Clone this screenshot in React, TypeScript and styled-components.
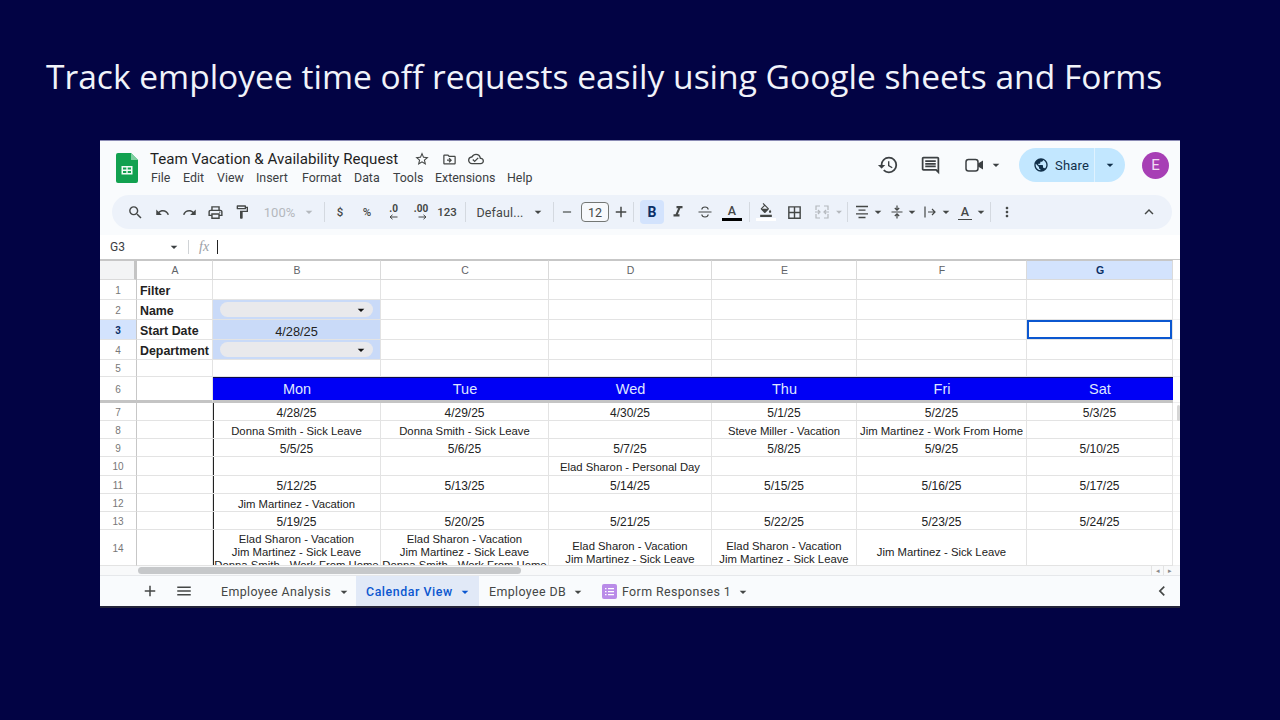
import React from "react";
import styled, { createGlobalStyle } from "styled-components";
import {
  MdAdd, MdArrowDropDown, MdBorderAll, MdChevronLeft, MdExpandLess, MdFormatColorFill,
  MdFormatItalic, MdHistory, MdMenu, MdMoreVert, MdOutlineComment, MdOutlineCloudDone, MdOutlineDriveFileMove,
  MdOutlineFormatPaint, MdPublic, MdRedo, MdSearch, MdStarBorder, MdUndo, MdRemove, MdOutlinePrint,
} from "react-icons/md";

const Global = createGlobalStyle`
  html, body { margin: 0; padding: 0; background: #020344; }
  * { box-sizing: border-box; }
`;
const Page = styled.div`
  width: 1280px; height: 720px; background: #020344; overflow: hidden;
  padding: 54px 0 0 46px;
`;
const Heading = styled.h1`
  margin: 0; font: 400 33.55px/44px "Open Sans", sans-serif; color: #f1f3fa; white-space: nowrap;
`;
const Win = styled.div`
  margin: 42px 0 0 54px; width: 1080px; height: 468px; background: #f9fbfd;
  border-top: 1px solid #8b8bb5; display: flex; flex-direction: column; overflow: hidden;
`;
const Top = styled.div`
  height: 54px; display: flex; align-items: flex-start; padding: 12px 11px 0 16px; flex: none;
`;
const Logo = styled.svg`
  width: 22px; height: 30px; flex: none; margin-right: 12px;
`;
const TitleCol = styled.div`
  display: flex; flex-direction: column;
`;
const TitleRow = styled.div`
  display: flex; align-items: center; height: 14px; margin-top: -1px;
  color: #444746; font-size: 15px;
`;
const Title = styled.span`
  font: 400 15.1px/14px Roboto, sans-serif; color: #1f1f1f; width: 258.500px; white-space: nowrap;
`;
const TitleIcon = styled.span`
  width: 27px; display: inline-flex; justify-content: center; color: #444746;
`;
const Menu = styled.div`
  display: flex; margin-top: 4px; padding-left: 1px; font: 400 12.4px/16px Roboto, sans-serif; color: #3c4043;
`;
const MenuItem = styled.span<{ $w: number }>`
  width: ${(p) => p.$w}px; white-space: nowrap;
`;
const TopRight = styled.div`
  margin-left: auto; display: flex; align-items: center; height: 34px; margin-top: -5px; color: #3c4043;
`;
const TopBtn = styled.span<{ $w: number }>`
  width: ${(p) => p.$w}px; display: inline-flex; justify-content: center; align-items: center; flex: none;
  svg { flex: none; }
`;
const VideoGlyph = styled.svg`
  width: 20px; height: 16px; flex: none;
`;
const Share = styled.div`
  width: 106px; height: 34px; border-radius: 17px; background: #c2e7ff; margin-left: 20px;
  display: flex; align-items: center; color: #11304a; font: 400 13px Roboto, sans-serif; letter-spacing: 0.2px;
`;
const ShareMain = styled.div`
  width: 76px; height: 100%; display: flex; align-items: center; padding-left: 14px; gap: 6px;
  border-right: 1px solid #dff2ff;
`;
const ShareCaret = styled.div`
  flex: 1; display: flex; justify-content: center; align-items: center;
`;
const Avatar = styled.div`
  width: 27px; height: 27px; border-radius: 50%; background: #a73fb5; color: #f0dcf2; margin-left: 17px;
  display: flex; align-items: center; justify-content: center; font: 400 15px Roboto, sans-serif;
`;
const Toolbar = styled.div`
  margin: 0 8px 0 12px; height: 34px; border-radius: 17px; background: #edf2fa; flex: none;
  display: flex; align-items: center; padding: 0 8px 0 10px; color: #444746;
`;
const Tool = styled.span<{ $w: number; $muted?: boolean }>`
  width: ${(p) => p.$w}px; height: 24px; flex: none; display: inline-flex; align-items: center; justify-content: center;
  color: ${(p) => (p.$muted ? "#b4b8bd" : "#444746")}; font: 500 11.5px Roboto, sans-serif; white-space: nowrap;
  svg { flex: none; }
`;
const Spacer = styled.span<{ $w: number }>`
  width: ${(p) => p.$w}px; flex: none;
`;
const Sep = styled.span<{ $w: number }>`
  width: ${(p) => p.$w}px; height: 20px; flex: none; display: inline-flex; justify-content: center;
  &::before { content: ""; width: 1px; background: #d4d9e0; }
`;
const ZoomTxt = styled.span`
  font: 400 13px Roboto, sans-serif; color: #b4b8bd; margin: 0 6px 0 8px;
`;
const FontName = styled.span`
  font: 400 12.5px Roboto, sans-serif; color: #444746; letter-spacing: 0.15px; margin-right: 6px;
`;
const SizeBox = styled.span`
  width: 28px; height: 20px; border: 1px solid #747775; border-radius: 4px; background: #f7f9fc;
  display: flex; align-items: center; justify-content: center; font: 400 12.5px Roboto, sans-serif; color: #444746;
`;
const BoldBtn = styled(Tool)`
  background: #d3e3fd; border-radius: 4px; color: #0b2f66; font: 700 14px Roboto, sans-serif;
`;
const ColorA = styled.span<{ $bar: string; $w?: number; $h?: number }>`
  display: flex; flex-direction: column; align-items: center; font: 500 12.5px/13px Roboto, sans-serif; color: #444746;
  &::after { content: ""; width: ${(p) => p.$w ?? 20}px; height: ${(p) => p.$h ?? 3}px; background: ${(p) => p.$bar}; margin-top: 1px; }
`;
const Decimal = styled.span`
  display: flex; flex-direction: column; align-items: flex-end; font: 700 10px/10px Roboto, sans-serif;
`;
const MiniArrow = styled.svg`
  width: 10px; height: 6px; display: block;
`;
const Glyph = styled.svg`
  width: 16px; height: 16px; flex: none; display: block;
`;
const Formula = styled.div`
  height: 25px; margin-top: 6px; flex: none; background: #fff; border-bottom: 1px solid #c7c7c7;
  display: flex; align-items: center; padding-left: 10px; font: 400 12px Roboto, sans-serif; color: #3c4043;
`;
const NameBox = styled.span`
  width: 72px; display: flex; justify-content: space-between; align-items: center;
`;
const Fx = styled.span`
  font: italic 400 14px "Liberation Serif", serif; color: #9aa0a6; margin: 0 8px 0 10px;
`;
const Cursor = styled.span`
  width: 1px; height: 14px; background: #222;
`;
const FormSep = styled.span`
  width: 1px; height: 14px; background: #d0d3d6; margin-left: 6px;
`;
const Grid = styled.div`
  display: grid; flex: none; background: #fff; height: 306px; overflow: hidden;
  grid-template-columns: 37px 76px 168px 168px 163px 145px 170px 146px 7px;
  grid-template-rows: 20px 20px 20px 20px 20px 17px 26px 18px 18px 18px 19px 18px 18px 18px 36px;
`;
const Cell = styled.div<{ $align?: string; $bold?: boolean; $fill?: boolean; $edge?: boolean; $size?: number }>`
  border-right: 1px solid #e3e3e3; border-bottom: 1px solid #e3e3e3; overflow: hidden;
  display: flex; align-items: center; justify-content: ${(p) => p.$align ?? "center"};
  font: ${(p) => (p.$bold ? 700 : 400)} ${(p) => p.$size ?? 12}px/13px "Liberation Sans", Arial, sans-serif; color: #222;
  white-space: nowrap; text-align: center; padding: ${(p) => (p.$align ? "3px 0 0 3px" : "3px 0 0")};
  background: ${(p) => (p.$fill ? "#c9daf8" : "#fff")};
  ${(p) => (p.$edge ? "box-shadow: inset 1px 0 0 #222;" : "")}
`;
const SelCell = styled(Cell)<{ $on: boolean }>`
  ${(p) => (p.$on ? "box-shadow: inset 0 0 0 2px #0b57d0;" : "")}
`;
const PillCell = styled(Cell)`
  padding: 0;
`;
const MultiCell = styled(Cell)`
  align-items: flex-start;
`;
const MultiInner = styled.div<{ $top: number }>`
  padding-top: ${(p) => p.$top}px;
`;
const ColHead = styled.div<{ $sel?: boolean; $corner?: boolean }>`
  border-right: ${(p) => (p.$corner ? "3px solid #c4c4c4" : "1px solid #dadada")};
  border-bottom: 1px solid #dadada; border-top: 1px solid #c7c7c7;
  background: ${(p) => (p.$corner ? "#f3f4f5" : p.$sel ? "#d3e3fd" : "#fff")};
  display: flex; align-items: center; justify-content: center; padding-left: 1px;
  font: ${(p) => (p.$sel ? 700 : 400)} 10.5px "Liberation Sans", Arial, sans-serif; color: ${(p) => (p.$sel ? "#0b2f66" : "#5f6368")};
`;
const RowHead = styled.div<{ $sel?: boolean; $thick?: boolean }>`
  border-right: 1px solid #c7c7c7; border-bottom: ${(p) => (p.$thick ? "3px solid #c4c4c4" : "1px solid #e3e3e3")};
  background: ${(p) => (p.$sel ? "#d3e3fd" : "#fff")}; padding-top: 1px;
  display: flex; align-items: center; justify-content: center;
  font: ${(p) => (p.$sel ? 700 : 400)} 10px "Liberation Sans", Arial, sans-serif; color: ${(p) => (p.$sel ? "#0b2f66" : "#777")};
`;
const Pill = styled.div`
  width: 153px; height: 15px; border-radius: 8px; background: #e9e9ec; display: flex; align-items: center;
  justify-content: flex-end; padding-right: 4px; color: #111;
`;
const DayCell = styled.div`
  background: #0000f5; color: #dfe6ff; font: 400 14.5px "Liberation Sans", Arial, sans-serif;
  border-top: 1px solid #0a0a50; border-bottom: 3px solid #c4c4c4;
  display: flex; align-items: center; justify-content: center;
`;
const PlainBottom = styled(Cell)`
  border-bottom: 3px solid #c4c4c4;
`;
const Gutter = styled.div`
  background: #fff; border-bottom: 1px solid #f0f0f0; position: relative;
`;
const ThumbGutter = styled(Gutter)`
  &::after { content: ""; position: absolute; left: 4px; top: 2px; width: 3px; height: 16px; background: #d6d6d6; border-radius: 2px; }
`;
const HScroll = styled.div`
  height: 10px; flex: none; background: #f8f9fa; border-bottom: 1px solid #e6e8eb; display: flex; align-items: center;
  padding: 0 5px 0 38px;
`;
const Thumb = styled.div`
  width: 383px; height: 7px; border-radius: 4px; background: #c6c8ca;
`;
const ArrowBox = styled.span`
  width: 12px; height: 9px; border-left: 1px solid #e3e3e3; display: flex; align-items: center; justify-content: center;
  font: 400 7px "Liberation Sans", Arial, sans-serif; color: #888;
`;
const ArrowWrap = styled.div`
  margin-left: auto; display: flex;
`;
const Tabs = styled.div`
  flex: 1; background: #f9fbfd; display: flex; align-items: stretch; border-bottom: 2px solid #24243a;
  font: 400 12.4px Roboto, sans-serif; letter-spacing: 0.4px; color: #444746; padding-left: 38px;
`;
const TabIcon = styled.span<{ $w: number }>`
  width: ${(p) => p.$w}px; display: flex; align-items: center; justify-content: center; flex: none;
`;
const TabItem = styled.div<{ $active?: boolean; $w: number; $pad: number }>`
  width: ${(p) => p.$w}px; padding: 1px 0 0 ${(p) => p.$pad}px; flex: none; display: flex; align-items: center; white-space: nowrap;
  background: ${(p) => (p.$active ? "#e1e9f7" : "transparent")};
  color: ${(p) => (p.$active ? "#0b57d0" : "#444746")}; font-weight: ${(p) => (p.$active ? 500 : 400)};
  letter-spacing: ${(p) => (p.$active ? "0.55px" : "0.4px")};
`;
const TabCaret = styled.span<{ $gap: number }>`
  display: inline-flex; margin-left: ${(p) => p.$gap}px;
`;
const FormGlyph = styled.svg`
  width: 15px; height: 15px; margin-right: 5px; flex: none;
`;
const TabEnd = styled.span`
  margin-left: auto; width: 36px; display: flex; align-items: center; justify-content: center; color: #444746;
`;

const Caret = ({ s = 18 }: { s?: number }) => <MdArrowDropDown size={s} />;

const cols = ["A", "B", "C", "D", "E", "F", "G"];
const days = ["Mon", "Tue", "Wed", "Thu", "Fri", "Sat"];
const rows: string[][] = [
  ["4/28/25", "4/29/25", "4/30/25", "5/1/25", "5/2/25", "5/3/25"],
  ["Donna Smith - Sick Leave", "Donna Smith - Sick Leave", "", "Steve Miller - Vacation", "Jim Martinez - Work From Home", ""],
  ["5/5/25", "5/6/25", "5/7/25", "5/8/25", "5/9/25", "5/10/25"],
  ["", "", "Elad Sharon - Personal Day", "", "", ""],
  ["5/12/25", "5/13/25", "5/14/25", "5/15/25", "5/16/25", "5/17/25"],
  ["Jim Martinez - Vacation", "", "", "", "", ""],
  ["5/19/25", "5/20/25", "5/21/25", "5/22/25", "5/23/25", "5/24/25"],
];
const row14: { lines: string[]; top: number }[] = [
  { lines: ["Elad Sharon - Vacation", "Jim Martinez - Sick Leave", "Donna Smith - Work From Home"], top: 0 },
  { lines: ["Elad Sharon - Vacation", "Jim Martinez - Sick Leave", "Donna Smith - Work From Home"], top: 0 },
  { lines: ["Elad Sharon - Vacation", "Jim Martinez - Sick Leave"], top: 7 },
  { lines: ["Elad Sharon - Vacation", "Jim Martinez - Sick Leave"], top: 7 },
  { lines: ["Jim Martinez - Sick Leave"], top: 13 },
  { lines: [], top: 0 },
];
const filters: { n: number; label: string; kind: "none" | "pill" | "date" }[] = [
  { n: 1, label: "Filter", kind: "none" },
  { n: 2, label: "Name", kind: "pill" },
  { n: 3, label: "Start Date", kind: "date" },
  { n: 4, label: "Department", kind: "pill" },
  { n: 5, label: "", kind: "none" },
];

export default function App() {
  return (
    <Page>
      <Global />
      <Heading>Track employee time off requests easily using Google sheets and Forms</Heading>
      <Win>
        <Top>
          <Logo viewBox="0 0 22 30">
            <path d="M2 0h13l7 7v21a2 2 0 0 1-2 2H2a2 2 0 0 1-2-2V2a2 2 0 0 1 2-2z" fill="#12a150" />
            <path d="M15 0l7 7h-7z" fill="#7fcfa0" />
            <path d="M5.500 13h11v8.500h-11z M7 14.500v2h3.300v-2z M11.700 14.500v2H15v-2z M7 18v2h3.300v-2z M11.700 18v2H15v-2z" fill="#f3fbf6" fillRule="evenodd" />
          </Logo>
          <TitleCol>
            <TitleRow>
              <Title>Team Vacation &amp; Availability Request</Title>
              <TitleIcon><MdStarBorder size={16} /></TitleIcon>
              <TitleIcon><MdOutlineDriveFileMove size={15} /></TitleIcon>
              <TitleIcon><MdOutlineCloudDone size={16} /></TitleIcon>
            </TitleRow>
            <Menu>
              <MenuItem $w={32}>File</MenuItem>
              <MenuItem $w={34}>Edit</MenuItem>
              <MenuItem $w={39}>View</MenuItem>
              <MenuItem $w={46}>Insert</MenuItem>
              <MenuItem $w={52}>Format</MenuItem>
              <MenuItem $w={39}>Data</MenuItem>
              <MenuItem $w={42}>Tools</MenuItem>
              <MenuItem $w={72}>Extensions</MenuItem>
              <MenuItem $w={30}>Help</MenuItem>
            </Menu>
          </TitleCol>
          <TopRight>
            <TopBtn $w={30}><MdHistory size={22} /></TopBtn>
            <TopBtn $w={54}><MdOutlineComment size={21} /></TopBtn>
            <TopBtn $w={36}>
              <VideoGlyph viewBox="0 0 20 16">
                <rect x="1" y="2.500" width="12" height="11.500" rx="2.500" fill="none" stroke="currentColor" strokeWidth="1.500" />
                <path d="M13 6.500l5-3v9l-5-3z" fill="currentColor" />
              </VideoGlyph>
            </TopBtn>
            <TopBtn $w={6}><Caret s={16} /></TopBtn>
            <Share>
              <ShareMain><MdPublic size={16} />Share</ShareMain>
              <ShareCaret><Caret s={16} /></ShareCaret>
            </Share>
            <Avatar>E</Avatar>
          </TopRight>
        </Top>
        <Toolbar>
          <Tool $w={27}><MdSearch size={17} /></Tool>
          <Tool $w={27}><MdUndo size={15} /></Tool>
          <Tool $w={26}><MdRedo size={15} /></Tool>
          <Tool $w={27}><MdOutlinePrint size={17} /></Tool>
          <Tool $w={26}><MdOutlineFormatPaint size={16} /></Tool>
          <Tool $w={63} $muted><ZoomTxt>100%</ZoomTxt><Caret s={16} /></Tool>
          <Sep $w={12} />
          <Tool $w={20}>$</Tool>
          <Tool $w={34}>%</Tool>
          <Tool $w={18}>
            <Decimal>.0
              <MiniArrow viewBox="0 0 10 6"><path d="M9.500 3H2M4.500 .8L2 3l2.500 2.200" fill="none" stroke="currentColor" strokeWidth="1" /></MiniArrow>
            </Decimal>
          </Tool>
          <Tool $w={38}>
            <Decimal>.00
              <MiniArrow viewBox="0 0 10 6"><path d="M.5 3H8M5.500 .8L8 3 5.500 5.200" fill="none" stroke="currentColor" strokeWidth="1" /></MiniArrow>
            </Decimal>
          </Tool>
          <Tool $w={14}>123</Tool>
          <Sep $w={22} />
          <Tool $w={70}><FontName>Defaul...</FontName><Caret s={16} /></Tool>
          <Sep $w={14} />
          <Tool $w={14}><MdRemove size={14} /></Tool>
          <Tool $w={42}><SizeBox>12</SizeBox></Tool>
          <Tool $w={10}><MdAdd size={18} /></Tool>
          <Sep $w={14} />
          <BoldBtn $w={24}>B</BoldBtn>
          <Tool $w={28}><MdFormatItalic size={18} /></Tool>
          <Tool $w={26}>
            <Glyph viewBox="0 0 16 16">
              <path d="M1.500 8h13M4.800 5.500C5 3.500 6.500 3 8 3s3 .6 3.200 2.500M4.800 10.500C5 12.500 6.500 13 8 13s3-.6 3.200-2.500" fill="none" stroke="currentColor" strokeWidth="1.200" />
            </Glyph>
          </Tool>
          <Tool $w={28}><ColorA $bar="#000">A</ColorA></Tool>
          <Sep $w={6} />
          <Tool $w={28}><ColorA $bar="#fff"><MdFormatColorFill size={14} /></ColorA></Tool>
          <Tool $w={28}><MdBorderAll size={17} /></Tool>
          <Tool $w={28} $muted>
            <Glyph viewBox="0 0 16 16">
              <path d="M2 6V2h4M10 2h4v4M2 10v4h4M10 14h4v-4M1 8h4M4 6l2 2-2 2M15 8h-4M12 6l-2 2 2 2" fill="none" stroke="currentColor" strokeWidth="1.200" />
            </Glyph>
          </Tool>
          <Tool $w={6} $muted><Caret s={14} /></Tool>
          <Sep $w={10} />
          <Tool $w={20}>
            <Glyph viewBox="0 0 16 16">
              <path d="M2 2.500h12M4.500 6.200h7M2 9.800h12M4.500 13.500h7" fill="none" stroke="currentColor" strokeWidth="1.300" />
            </Glyph>
          </Tool>
          <Tool $w={12}><Caret s={16} /></Tool>
          <Spacer $w={5} />
          <Tool $w={16}>
            <Glyph viewBox="0 0 16 16">
              <path d="M2.500 8h11M8 1.500v4.500M5.800 4L8 6.200 10.200 4M8 14.500V10M5.800 12L8 9.800l2.200 2.200" fill="none" stroke="currentColor" strokeWidth="1.200" />
            </Glyph>
          </Tool>
          <Tool $w={14}><Caret s={16} /></Tool>
          <Tool $w={22}>
            <Glyph viewBox="0 0 16 16">
              <path d="M3 2.500v11M6 8h7M10 5l3 3-3 3" fill="none" stroke="currentColor" strokeWidth="1.200" />
            </Glyph>
          </Tool>
          <Tool $w={10}><Caret s={16} /></Tool>
          <Tool $w={28}><ColorA $bar="#444746" $w={14} $h={1}>A</ColorA></Tool>
          <Tool $w={4}><Caret s={16} /></Tool>
          <Sep $w={14} />
          <Tool $w={20}><MdMoreVert size={16} /></Tool>
          <Spacer $w={117} />
          <Tool $w={30}><MdExpandLess size={18} /></Tool>
        </Toolbar>
        <Formula>
          <NameBox>G3<Caret s={16} /></NameBox>
          <FormSep />
          <Fx>fx</Fx>
          <Cursor />
        </Formula>
        <Grid>
          <ColHead $corner />
          {cols.map((c) => <ColHead key={c} $sel={c === "G"}>{c}</ColHead>)}
          <Gutter />
          {filters.map((f) => (
            <React.Fragment key={f.n}>
              <RowHead $sel={f.n === 3}>{f.n}</RowHead>
              <Cell $align="flex-start" $bold $size={12.4}>{f.label}</Cell>
              {f.kind === "pill" ? (
                <PillCell $fill><Pill><Caret s={16} /></Pill></PillCell>
              ) : (
                <Cell $fill={f.kind === "date"} $size={12.8}>{f.kind === "date" && "4/28/25"}</Cell>
              )}
              <Cell /><Cell /><Cell /><Cell />
              <SelCell $on={f.n === 3} />
              <Gutter />
            </React.Fragment>
          ))}
          <RowHead $thick>6</RowHead>
          <PlainBottom />
          {days.map((d) => <DayCell key={d}>{d}</DayCell>)}
          <Gutter />
          {rows.map((r, i) => (
            <React.Fragment key={i}>
              <RowHead>{i + 7}</RowHead>
              <Cell />
              {r.map((t, j) => <Cell key={j} $edge={j === 0} $size={t.includes(" - ") ? 11.3 : 12}>{t}</Cell>)}
              {i === 0 ? <ThumbGutter /> : <Gutter />}
            </React.Fragment>
          ))}
          <RowHead>14</RowHead>
          <Cell />
          {row14.map((c, j) => (
            <MultiCell key={j} $edge={j === 0} $size={11.3}>
              <MultiInner $top={c.top}>
                {c.lines.map((l) => <div key={l}>{l}</div>)}
              </MultiInner>
            </MultiCell>
          ))}
          <Gutter />
        </Grid>
        <HScroll>
          <Thumb />
          <ArrowWrap>
            <ArrowBox>◂</ArrowBox>
            <ArrowBox>▸</ArrowBox>
          </ArrowWrap>
        </HScroll>
        <Tabs>
          <TabIcon $w={24}><MdAdd size={18} /></TabIcon>
          <TabIcon $w={44}><MdMenu size={18} /></TabIcon>
          <TabItem $w={150} $pad={15}>Employee Analysis<TabCaret $gap={5}><Caret s={16} /></TabCaret></TabItem>
          <TabItem $active $w={123} $pad={10}>Calendar View<TabCaret $gap={4}><Caret s={16} /></TabCaret></TabItem>
          <TabItem $w={113} $pad={10}>Employee DB<TabCaret $gap={4}><Caret s={16} /></TabCaret></TabItem>
          <TabItem $w={180} $pad={10}>
            <FormGlyph viewBox="0 0 15 15">
              <rect width="15" height="15" rx="2" fill="#b98be8" />
              <path d="M3 4h1.500v1.200H3zM6 4h6v1.200H6zM3 7h1.500v1.200H3zM6 7h6v1.200H6zM3 10h1.500v1.200H3zM6 10h6v1.200H6z" fill="#fff" />
            </FormGlyph>
            Form Responses 1<TabCaret $gap={4}><Caret s={16} /></TabCaret>
          </TabItem>
          <TabEnd><MdChevronLeft size={20} /></TabEnd>
        </Tabs>
      </Win>
    </Page>
  );
}
